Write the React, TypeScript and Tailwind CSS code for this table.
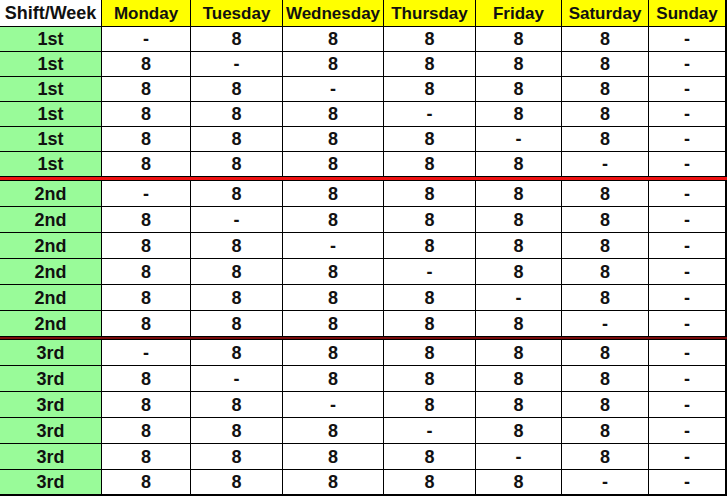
const days = ["Monday", "Tuesday", "Wednesday", "Thursday", "Friday", "Saturday", "Sunday"];

const cols = "grid grid-cols-[102px_89px_92px_101px_92px_86px_87px_78px]";

const shifts = [
  { name: "1st", rowH: "h-[25px]" },
  { name: "2nd", rowH: "h-[26px]" },
  { name: "3rd", rowH: "h-[26px]" },
];

const cellBase = "flex items-center justify-center border-b border-r border-black";

function ShiftRows({ name, rowH, last }: { name: string; rowH: string; last: boolean }) {
  return (
    <>
      {[0, 1, 2, 3, 4, 5].map((i) => {
        const isLast = last && i === 5;
        return (
          <div key={i} className={cols}>
            <div className={`${cellBase} ${rowH} ${isLast ? "border-b-2" : ""} bg-[#99fb99]`}>{name}</div>
            {days.map((d, j) => (
              <div
                key={d}
                className={`${cellBase} ${rowH} ${isLast ? "border-b-2" : ""} ${j === 6 ? "border-r-2" : ""} bg-white`}
              >
                {j === 6 || j === i ? "-" : "8"}
              </div>
            ))}
          </div>
        );
      })}
    </>
  );
}

export default function App() {
  return (
    <div className="w-[727px] h-[497px] bg-white text-[#111] text-[18px] font-bold font-['Liberation_Sans',Arial,sans-serif] leading-none">
      <div className={`${cols} text-[17px]`}>
        <div className={`${cellBase} h-[27px] bg-white text-[18px]`}>Shift/Week</div>
        {days.map((d, j) => (
          <div key={d} className={`${cellBase} h-[27px] bg-[#ffff00] ${j === 6 ? "border-r-2" : ""}`}>
            {d}
          </div>
        ))}
      </div>
      <ShiftRows name={shifts[0].name} rowH={shifts[0].rowH} last={false} />
      <div className="h-[4px] w-[727px] bg-[#ee1111] border-b border-black" />
      <ShiftRows name={shifts[1].name} rowH={shifts[1].rowH} last={false} />
      <div className="h-[3px] w-[727px] bg-[#7a0a0a] border-b border-black" />
      <ShiftRows name={shifts[2].name} rowH={shifts[2].rowH} last={true} />
    </div>
  );
}
